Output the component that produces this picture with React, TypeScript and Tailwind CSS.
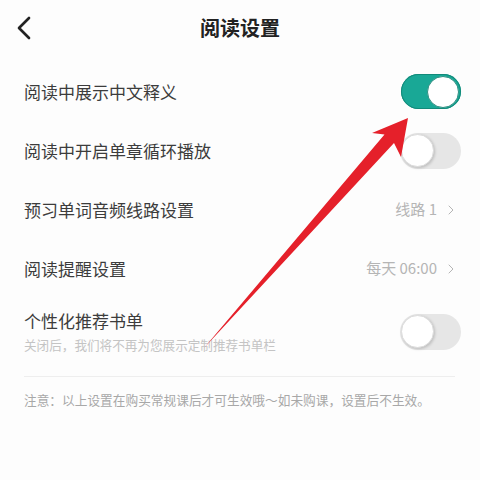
import { ChevronLeft, ChevronRight } from 'lucide-react';

function Toggle({ on }: { on: boolean }) {
  return on ? (
    <div className="flex h-[35px] w-[60px] items-center justify-end rounded-full bg-[#19a896] pr-[2px] shadow-[inset_0_0_0_1px_#128a7a]">
      <div className="h-[32px] w-[32px] rounded-full border border-[#2f8f82] bg-white" />
    </div>
  ) : (
    <div className="flex h-[36px] w-[61px] items-center rounded-full bg-[#e6e6e6] pl-[1px]">
      <div className="h-[33px] w-[33px] rounded-full border border-[#dcdcdc] bg-white shadow-[1px_1px_3px_rgba(0,0,0,0.18)]" />
    </div>
  );
}

export default function App() {
  return (
    <div
      className="relative h-[480px] w-[480px] overflow-hidden bg-[#fdfdfd] text-[#3c3c3c]"
      style={{ fontFamily: '"Noto Sans CJK SC", "Noto Sans", sans-serif' }}
    >
      {/* Header */}
      <div className="relative flex h-[56px] items-center justify-center">
        <ChevronLeft className="absolute left-[4px] top-[8px] h-[40px] w-[40px] text-[#222]" strokeWidth={1.6} />
        <h1 className="text-[20px] font-bold text-[#222]">阅读设置</h1>
      </div>

      {/* Settings list */}
      <div className="pl-6 pr-[19px] pt-[6px]">
        <div className="flex h-[59px] items-center justify-between">
          <span className="text-[17px]">阅读中展示中文释义</span>
          <Toggle on />
        </div>
        <div className="flex h-[59px] items-center justify-between">
          <span className="text-[17px]">阅读中开启单章循环播放</span>
          <Toggle on={false} />
        </div>
        <div className="flex h-[59px] items-center justify-between">
          <span className="text-[17px]">预习单词音频线路设置</span>
          <div className="mr-[2px] flex items-center gap-[6px] text-[15px] text-[#b5b5b5]">
            <span>线路 1</span>
            <ChevronRight className="h-[16px] w-[16px]" strokeWidth={1.5} />
          </div>
        </div>
        <div className="flex h-[59px] items-center justify-between">
          <span className="text-[17px]">阅读提醒设置</span>
          <div className="mr-[2px] flex items-center gap-[6px] text-[15px] text-[#b5b5b5]">
            <span>每天 06:00</span>
            <ChevronRight className="h-[16px] w-[16px]" strokeWidth={1.5} />
          </div>
        </div>
        <div className="flex items-center justify-between pb-[22px] pt-[11px]">
          <div className="flex flex-col gap-[3px]">
            <span className="text-[17px] leading-[24px]">个性化推荐书单</span>
            <span className="text-[12.6px] leading-[18px] text-[#c4c4c4]">关闭后，我们将不再为您展示定制推荐书单栏</span>
          </div>
          <Toggle on={false} />
        </div>
        <div className="mr-[6px] h-px bg-[#eeeeee]" />
        <p className="pt-[14px] text-[12.7px] leading-[18px] text-[#a8a8a8]">
          注意：以上设置在购买常规课后才可生效哦～如未购课，设置后不生效。
        </p>
      </div>

      {/* Red annotation arrow */}
      <svg className="pointer-events-none absolute left-0 top-0" width="480" height="480" viewBox="0 0 480 480">
        <polygon
          points="408,118 401,157 394,143 204,348 384.5,134.5 372,133"
          fill="#e5202a"
        />
      </svg>
    </div>
  );
}
